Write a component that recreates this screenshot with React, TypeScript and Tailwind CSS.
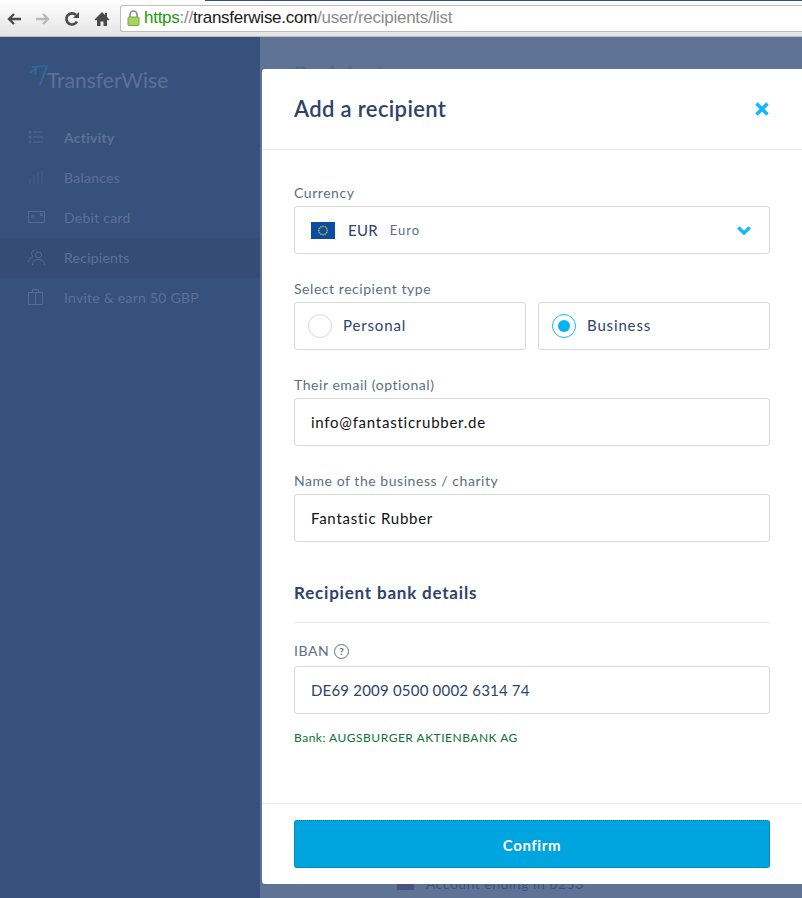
import type { ReactNode } from "react";

const fontStack = { fontFamily: "Lato, 'Open Sans', sans-serif" };

const navItems = [
  { label: "Activity", icon: <ActivityIcon />, bold: true },
  { label: "Balances", icon: <BalancesIcon /> },
  { label: "Debit card", icon: <CardIcon /> },
  { label: "Recipients", icon: <PeopleIcon />, active: true },
  { label: "Invite & earn 50 GBP", icon: <GiftIcon /> },
];

export default function App() {
  return (
    <div className="relative flex h-[898px] w-[802px] flex-col overflow-hidden bg-[#5f7397]" style={fontStack}>
      <BrowserBar />
      <div className="flex flex-1">
        <aside className="w-[260px] bg-[#38507c]">
          <div className="flex h-[81px] items-start pl-[29px] pt-[27px]">
            <svg width="20" height="24" viewBox="0 0 20 24" fill="none" className="mt-[-1px] text-[#2c6a9c]">
              <path d="M3 4 L18 3 L11 22 M1 10 L6.5 6 L6.5 12" stroke="currentColor" strokeWidth="2" />
            </svg>
            <span className="ml-[-2px] mt-[3px] text-[21px] leading-[26px] text-[#5c7197]">TransferWise</span>
          </div>
          <nav>
            {navItems.map((item) => (
              <div
                key={item.label}
                className={`flex h-[40px] items-center pb-[2px] pl-[28px] ${item.active ? "bg-[#354c77]" : ""}`}
              >
                <span className="flex w-[36px] shrink-0 text-[#536a92]">{item.icon}</span>
                <span className={`text-[14px] tracking-[0.25px] text-[#5c7197] ${item.bold ? "font-bold" : ""}`}>
                  {item.label}
                </span>
              </div>
            ))}
          </nav>
        </aside>
        <main className="flex-1 pl-[34px] pt-[24px]">
          <div className="text-[22px] font-semibold leading-[28px] text-[#51678d]">Recipients</div>
        </main>
      </div>
      <div className="absolute bottom-[4px] left-[397px] flex items-center gap-[12px] text-[14px] leading-[20px] tracking-[0.5px] text-[#3e5379]">
        <span className="h-[12px] w-[17px] bg-[#49557f]" />
        Account ending in 6253
      </div>
      <Modal />
    </div>
  );
}

function Modal() {
  return (
    <section className="absolute left-[262px] top-[69px] flex h-[815px] w-[540px] flex-col rounded-l-[3px] bg-white">
      <header className="flex h-[81px] shrink-0 items-center justify-between border-b border-[#e6e8ea] pl-[32px] pr-[33px]">
        <h1 className="text-[22px] font-semibold leading-[28px] tracking-[0.35px] text-[#2e4369]">Add a recipient</h1>
        <svg width="14" height="14" viewBox="0 0 14 14" fill="none" stroke="#12b8ff" strokeWidth="3.6">
          <path d="M1.5 1.5l11 11M12.5 1.5l-11 11" />
        </svg>
      </header>

      <div className="flex flex-1 flex-col px-[32px] pt-[33px]">
        <Label>Currency</Label>
        <div className="flex h-[48px] items-center rounded-[3px] border border-[#d5d7d9] pl-[16px] pr-[18px]">
          <EuFlag />
          <span className="ml-[13px] text-[15px] tracking-[0.25px] text-[#2e4369]">EUR</span>
          <span className="ml-[12px] mt-[1px] text-[13px] tracking-[1px] text-[#5c6f80]">Euro</span>
          <svg width="14" height="9" viewBox="0 0 14 9" fill="none" stroke="#12b8ff" strokeWidth="3.4" className="ml-auto">
            <path d="M1.2 1.5 7 7l5.8-5.5" />
          </svg>
        </div>

        <Label className="mt-[25px]">Select recipient type</Label>
        <div className="flex gap-[12px]">
          <RadioCard label="Personal" />
          <RadioCard label="Business" checked />
        </div>

        <Label className="mt-[25px]">Their email (optional)</Label>
        <Field value="info@fantasticrubber.de" dark />

        <Label className="mt-[25px]">Name of the business / charity</Label>
        <Field value="Fantastic Rubber" dark />

        <h2 className="mt-[40px] text-[17px] font-bold leading-[22px] tracking-[0.8px] text-[#2e4369]">
          Recipient bank details
        </h2>
        <div className="mt-[18px] border-t border-[#e6e8ea]" />

        <Label className="mt-[18px]">
          <span className="flex items-center gap-[5px]">
            IBAN
            <span className="flex h-[15px] w-[15px] items-center justify-center rounded-full border-[1.5px] border-[#5c6f80] text-[10px] font-bold leading-none">
              ?
            </span>
          </span>
        </Label>
        <div className="mt-[2px]">
          <Field value="DE69 2009 0500 0002 6314 74" />
        </div>
        <p className="mt-[16px] text-[12px] leading-[16px] tracking-[0.5px] text-[#0f7038]">
          Bank: AUGSBURGER AKTIENBANK AG
        </p>
      </div>

      <footer className="flex h-[81px] shrink-0 border-t border-[#e6e8ea] px-[32px] pt-[16px]">
        <button className="h-[48px] w-full rounded-[3px] border border-dotted border-[#0b6f9c] bg-[#00a4df] pt-[2px] text-[15px] font-bold tracking-[0.6px] text-white">
          Confirm
        </button>
      </footer>
    </section>
  );
}

function Label({ children, className = "" }: { children: ReactNode; className?: string }) {
  return (
    <div className={`mb-[5px] h-[18px] pt-[1px] text-[14px] leading-[18px] tracking-[0.55px] text-[#5c6f80] ${className}`}>
      {children}
    </div>
  );
}

function Field({ value, dark }: { value: string; dark?: boolean }) {
  return (
    <div
      className={`flex h-[48px] shrink-0 items-center rounded-[3px] border border-[#d5d7d9] pl-[16px] text-[15px] ${
        dark ? "tracking-[0.75px] text-[#111111]" : "tracking-[0.2px] text-[#2e4369]"
      }`}
    >
      {value}
    </div>
  );
}

function RadioCard({ label, checked }: { label: string; checked?: boolean }) {
  return (
    <div className="flex h-[48px] flex-1 items-center rounded-[3px] border border-[#d5d7d9] pl-[13px]">
      <span
        className={`flex h-[24px] w-[24px] items-center justify-center rounded-full border ${
          checked ? "border-[#12b8ff]" : "border-[#d5d7d9]"
        }`}
      >
        {checked && <span className="h-[12px] w-[12px] rounded-full bg-[#00b4f5]" />}
      </span>
      <span className="ml-[11px] pb-[2px] text-[15px] tracking-[0.85px] text-[#2e4369]">{label}</span>
    </div>
  );
}

function EuFlag() {
  return (
    <svg width="24" height="17" viewBox="0 0 24 17" className="shrink-0">
      <rect width="24" height="17" fill="#0a4da2" />
      {[0, 30, 60, 90, 120, 150, 180, 210, 240, 270, 300, 330].map((a) => (
        <circle
          key={a}
          cx={12 + 4.2 * Math.cos((a * Math.PI) / 180)}
          cy={8.5 + 4.2 * Math.sin((a * Math.PI) / 180)}
          r="0.9"
          fill="#a9a83e"
        />
      ))}
    </svg>
  );
}

function BrowserBar() {
  return (
    <div className="relative flex h-[37px] shrink-0 items-center border-b border-[#bdbdbd] bg-gradient-to-b from-white to-[#e4e4e4]">
      <div className="absolute right-0 top-0 h-[1px] w-[597px] bg-[#2f4f8a]" />
      <div className="flex w-[120px] shrink-0 items-center pl-[6px] pt-[1px] text-[#4a4a4a]">
        <svg width="16" height="14" viewBox="0 0 16 14" fill="none" stroke="currentColor" strokeWidth="2.4">
          <path d="M15 7H3M8 2 3 7l5 5" />
        </svg>
        <svg width="16" height="14" viewBox="0 0 16 14" fill="none" stroke="#b9b9b9" strokeWidth="2.4" className="ml-[13px]">
          <path d="M1 7h12M8 2l5 5-5 5" />
        </svg>
        <svg width="16" height="16" viewBox="0 0 16 16" fill="none" stroke="currentColor" strokeWidth="2.6" className="ml-[13px]">
          <path d="M13 10.5A5.6 5.6 0 1 1 12 4" />
          <path d="M15 1v6H9z" fill="currentColor" stroke="none" />
        </svg>
        <svg width="16" height="16" viewBox="0 0 16 16" fill="currentColor" className="ml-[14px]">
          <path d="M8 1 0.5 8.5 2 9.5 3 8.7V15h3.5v-4.5h3V15H13V8.7l1 .8 1.5-1-2.5-2.5V2h-2v2z" />
        </svg>
      </div>
      <div className="flex h-[27px] flex-1 items-center rounded-l-[3px] border border-r-0 border-[#bdbdbd] bg-white pl-[6px]">
        <svg width="13" height="16" viewBox="0 0 13 16" className="shrink-0">
          <path d="M3 7V4.5a3.5 3.5 0 0 1 7 0V7" fill="none" stroke="#8a8a8a" strokeWidth="1.6" />
          <rect x="1" y="7" width="11" height="8.5" rx="1" fill="#a6d365" stroke="#77a83c" />
        </svg>
        <span
          className="ml-[4px] text-[17px] leading-[20px] tracking-[-0.27px]"
          style={{ fontFamily: "'Liberation Sans', sans-serif" }}
        >
          <span className="text-[#1e9a0f]">https</span>
          <span className="text-[#8a8a8a]">://</span>
          <span className="text-[#1a1a1a]">transferwise.com</span>
          <span className="text-[#8a8a8a]">/user/recipients/list</span>
        </span>
      </div>
    </div>
  );
}

function ActivityIcon() {
  return (
    <svg width="16" height="14" viewBox="0 0 16 14" fill="none" stroke="currentColor">
      <circle cx="2" cy="2" r="1" />
      <circle cx="2" cy="7" r="1" />
      <circle cx="2" cy="12" r="1" />
      <path d="M5 2h10M5 7h10M5 12h10" />
    </svg>
  );
}

function BalancesIcon() {
  return (
    <svg width="16" height="14" viewBox="0 0 16 14" fill="none" stroke="#47608a">
      <path d="M2 14V8M6 14V5M10 14V2M14 14V0" />
    </svg>
  );
}

function CardIcon() {
  return (
    <svg width="17" height="12" viewBox="0 0 17 12" fill="none" stroke="currentColor">
      <rect x="0.5" y="0.5" width="16" height="11" />
      <path d="M3 5h4M3 7h3" />
      <rect x="12.5" y="2.5" width="2" height="2" />
    </svg>
  );
}

function PeopleIcon() {
  return (
    <svg width="18" height="17" viewBox="0 0 18 17" fill="none" stroke="currentColor">
      <circle cx="10.5" cy="6" r="3" />
      <path d="M4.5 16c0-4 2.5-5.5 6-5.5s6 1.5 6 5.5" />
      <path d="M6.5 1.5C4.5 1.5 3.5 3 3.5 4.5S4.5 7 5.5 7.5C3 8 .5 10 .5 13" />
    </svg>
  );
}

function GiftIcon() {
  return (
    <svg width="15" height="16" viewBox="0 0 15 16" fill="none" stroke="currentColor">
      <rect x="0.5" y="3.5" width="14" height="12" />
      <path d="M7.5 3.5v12M4.5 3.5V.5h6v3" />
    </svg>
  );
}
